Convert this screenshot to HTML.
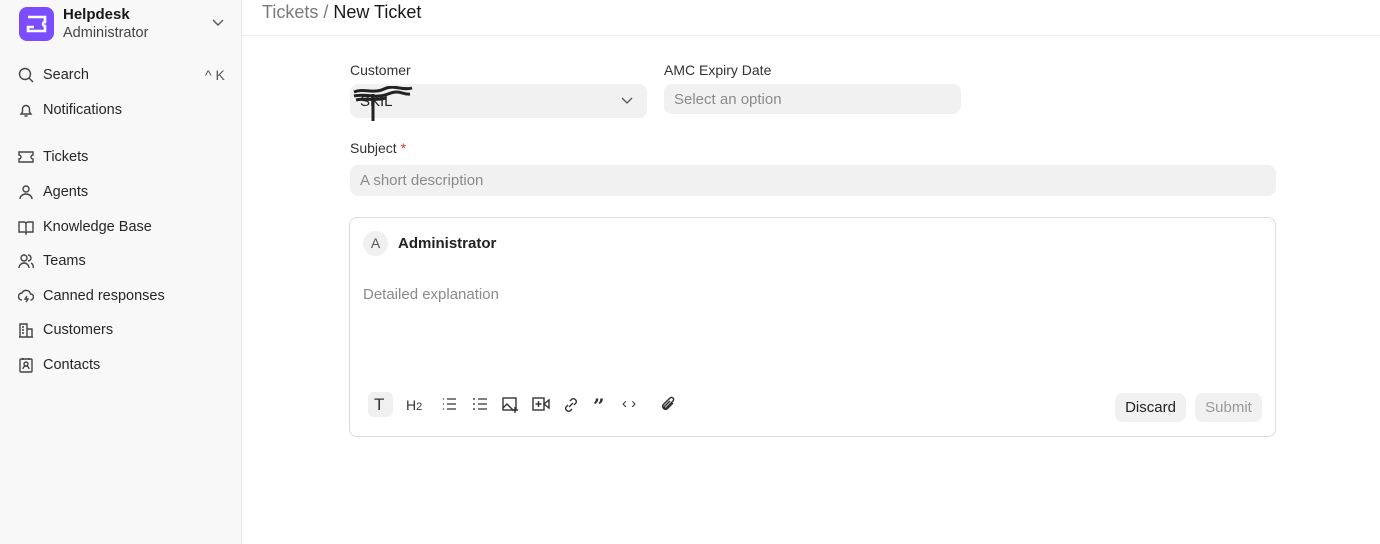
<!DOCTYPE html>
<html><head><style>
*{box-sizing:border-box;margin:0;padding:0}
body{width:1380px;height:544px;font-family:"Liberation Sans",sans-serif;background:#fff;position:relative;overflow:hidden;color:#171717}
.sb{position:absolute;left:0;top:0;width:242px;height:544px;background:#f8f8f8;border-right:1px solid #e8e8e8}
.logo{position:absolute;left:19px;top:7px;width:35px;height:34px;background:#7c4dff;border-radius:8px}
.item{position:absolute;left:18px;font-size:14.5px;color:#262626;display:flex;align-items:center}
.item svg{width:16px;height:16px;margin-right:9px;fill:none;stroke:#444;stroke-width:1.4}
.abs{position:absolute}
.lbl{font-size:14px;color:#333}
.inp{background:#f1f1f1;border-radius:8px;font-size:15px;color:#8a8a8a;padding-left:10px;display:flex;align-items:center}
.tb{position:absolute;top:396px;font-size:14px;color:#333}
</style></head><body>
<div class="sb">
<div class="logo"><svg width="35" height="34" viewBox="0 0 35 34"><path d="M9 10h17v5a2 2 0 0 0 0 4v5H9v-4h6" fill="none" stroke="#fff" stroke-width="2.6"/></svg></div>
<div class="abs" style="left:63px;top:6px;font-size:15px;font-weight:bold">Helpdesk</div>
<div class="abs" style="left:63px;top:25px;font-size:14.5px;color:#444">Administrator</div>
<svg class="abs" style="left:212px;top:19px" width="12" height="8"><path d="M1 1l5 5 5-5" fill="none" stroke="#555" stroke-width="1.4"/></svg>
<div class="item" style="top:67px"><svg viewBox="0 0 16 16"><circle cx="7" cy="7" r="5.5"/><path d="M11 11l4 4"/></svg>Search</div>
<div class="abs" style="left:205px;top:67px;font-size:14px;color:#555">^ K</div>
<div class="item" style="top:102px"><svg viewBox="0 0 16 16"><path d="M3 12h10l-1.5-2V7a3.5 3.5 0 0 0-7 0v3zM6.5 14h3"/></svg>Notifications</div>
<div class="item" style="top:149px"><svg viewBox="0 0 16 16"><path d="M1 3h14v3a2 2 0 0 0 0 4v3H1v-3a2 2 0 0 0 0-4z"/></svg>Tickets</div>
<div class="item" style="top:184px"><svg viewBox="0 0 16 16"><circle cx="8" cy="5" r="3"/><path d="M2 15a6 5 0 0 1 12 0"/></svg>Agents</div>
<div class="item" style="top:219px"><svg viewBox="0 0 16 16"><path d="M1 3h5a2 2 0 0 1 2 2v9a2 2 0 0 0-2-1H1zM15 3h-5a2 2 0 0 0-2 2v9a2 2 0 0 1 2-1h5z"/></svg>Knowledge Base</div>
<div class="item" style="top:253px"><svg viewBox="0 0 16 16"><circle cx="6" cy="5" r="3"/><path d="M1 15a5 5 0 0 1 10 0M10 2a3 3 0 0 1 0 6M13 10a4 4 0 0 1 2 5"/></svg>Teams</div>
<div class="item" style="top:288px"><svg viewBox="0 0 16 16"><path d="M4 12a3.5 3.5 0 0 1 0-7 4.5 4.5 0 0 1 8.5 1 3 3 0 0 1 0 6M9 8l-2 3h3l-2 3"/></svg>Canned responses</div>
<div class="item" style="top:322px"><svg viewBox="0 0 16 16"><path d="M2 15V2h7v13M9 7h5v8M1 15h14M4 5h2M4 8h2M4 11h2"/></svg>Customers</div>
<div class="item" style="top:357px"><svg viewBox="0 0 16 16"><rect x="2" y="2" width="12" height="13" rx="1"/><circle cx="8" cy="7" r="2"/><path d="M5 12a3 3 0 0 1 6 0M5 1v2M11 1v2"/></svg>Contacts</div>
</div>
<div class="abs" style="left:262px;top:2px;font-size:18px;color:#7a7a7a">Tickets / <span style="color:#171717">New Ticket</span></div>
<div class="abs" style="left:242px;top:35px;width:1138px;height:1px;background:#ececec"></div>
<div class="abs lbl" style="left:350px;top:62px">Customer</div>
<div class="abs inp" style="left:350px;top:84px;width:297px;height:34px;color:#222">SKIL</div>
<svg class="abs" style="left:352px;top:86px" width="62" height="36"><path d="M2 6c10-4 20 2 30-3s18 2 28-1M2 10c12-3 22 3 34-2s14 1 22 0M4 14c10-2 20 1 30-2M21 8v27" fill="none" stroke="#222" stroke-width="3"/></svg>
<svg class="abs" style="left:621px;top:97px" width="12" height="8"><path d="M1 1l5 5 5-5" fill="none" stroke="#555" stroke-width="1.3"/></svg>
<div class="abs lbl" style="left:664px;top:62px">AMC Expiry Date</div>
<div class="abs inp" style="left:664px;top:84px;width:297px;height:30px">Select an option</div>
<div class="abs lbl" style="left:350px;top:140px">Subject <span style="color:#e03131">*</span></div>
<div class="abs inp" style="left:350px;top:165px;width:926px;height:31px">A short description</div>
<div class="abs" style="left:349px;top:217px;width:927px;height:220px;border:1px solid #dcdcdc;border-radius:8px"></div>
<div class="abs" style="left:363px;top:231px;width:25px;height:25px;border-radius:50%;background:#f0f0f0;font-size:14px;color:#555;text-align:center;line-height:25px">A</div>
<div class="abs" style="left:398px;top:235px;font-size:15px;font-weight:bold;color:#222">Administrator</div>
<div class="abs" style="left:363px;top:286px;font-size:15px;color:#8a8a8a">Detailed explanation</div>
<div class="abs" style="left:368px;top:392px;width:25px;height:25px;background:#f0f0f0;border-radius:6px"></div>
<div class="tb" style="left:374px;font-size:17px;top:395px">T</div>
<div class="tb" style="left:406px;top:397px">H<span style="font-size:11px">2</span></div>
<svg class="abs" style="left:442px;top:397px" width="15" height="14" fill="none" stroke="#333" stroke-width="1.3"><path d="M1 2h1M1 7h1M1 12h1M5 2h9M5 7h9M5 12h9"/></svg>
<svg class="abs" style="left:473px;top:397px" width="15" height="14" fill="none" stroke="#333" stroke-width="1.3"><path d="M1 1v2M1 6v2M1 11v2M5 2h9M5 7h9M5 12h9"/></svg>
<svg class="abs" style="left:502px;top:396px" width="17" height="17" fill="none" stroke="#333" stroke-width="1.4"><rect x="1" y="2" width="13" height="12"/><path d="M1 12l4-4 6 6M13 11v6M10 14h6"/></svg>
<svg class="abs" style="left:532px;top:397px" width="18" height="14" fill="none" stroke="#333" stroke-width="1.4"><rect x="1" y="1" width="11" height="12"/><path d="M12 7l5-4v8zM6.5 4v6M3.5 7h6"/></svg>
<svg class="abs" style="left:563px;top:397px" width="16" height="16" fill="none" stroke="#333" stroke-width="1.4"><path d="M6 10l4-4M7 4l2-2a3 3 0 0 1 4 4l-2 2M9 12l-2 2a3 3 0 0 1-4-4l2-2"/></svg>
<div class="tb" style="left:593px;top:394px;font-size:20px;font-weight:bold;font-family:'DejaVu Serif',serif">”</div>
<div class="tb" style="left:622px;top:395px;font-size:15px">‹ ›</div>
<svg class="abs" style="left:660px;top:396px" width="16" height="16" fill="none" stroke="#333" stroke-width="1.5"><path d="M13 7l-6 6a3 3 0 0 1-4-4l7-7a2 2 0 0 1 3 3l-7 7a1 1 0 0 1-1.5-1.5l5.5-5.5"/></svg>
<div class="abs" style="left:1115px;top:393px;width:71px;height:29px;background:#f1f1f1;border-radius:8px;font-size:15px;color:#222;text-align:center;line-height:29px">Discard</div>
<div class="abs" style="left:1195px;top:393px;width:67px;height:29px;background:#f1f1f1;border-radius:8px;font-size:15px;color:#999;text-align:center;line-height:29px">Submit</div>
</body></html>
